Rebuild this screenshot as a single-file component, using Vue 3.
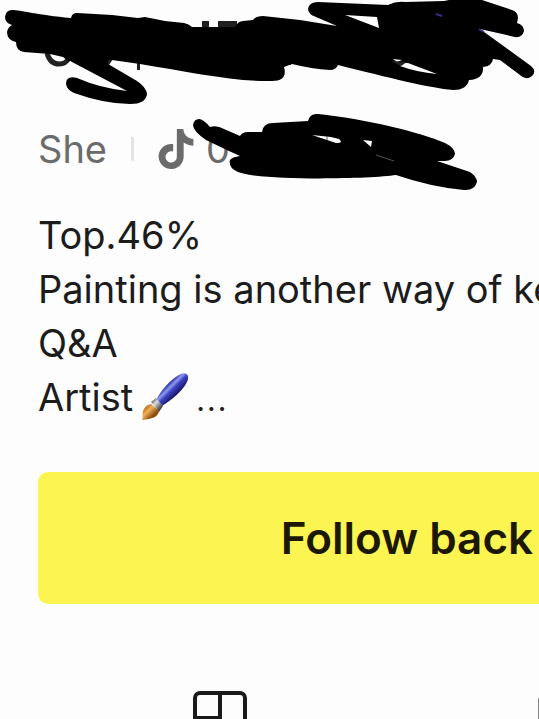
<script setup>
const bioLines = ['Top.46%', 'Painting is another way of ke', 'Q&A']
</script>

<template>
  <main class="page">
    <svg class="marks" viewBox="0 0 539 200" aria-hidden="true">
      <g class="name-bits">
        <path d="M202 21h7v7h-7zM218 21h19v9h-19zM137 62h3v8h-3zM103 59h10l-4 6h-5zM278 61h13v4h-13z" />
        <path class="arc" d="M47 53Q50 64 59 64Q66 64 69 58" />
      </g>
      <path
        fill-rule="evenodd"
        d="M12 10C20 10 38 15 71 18Q72 13 77 13L112 15L138 18L145 17L165 21L184 23Q189 24 192 27L235 27Q238 21 243 21L253 20Q256 16 263 16L300 20L337 26L316 17Q308 14 308 9Q309 2 318 2L388 5Q396 1 405 2L444 1L449 0H482L512 10Q518 12 518 18L517 23Q524 25 524 31Q522 38 515 37L480 29L531 66Q537 71 532 76Q526 81 520 75L500 60L493 59Q492 66 483 67Q484 79 469 80Q467 90 453 90C430 88 390 78 338 65Q336 70 330 70Q312 69 292 64L284 67Q288 81 272 81C235 82 190 72 140 64L112 60L68 61L63 57L50 54L24 52Q16 51 16 42Q7 40 7 32Q8 27 12 25Q5 23 5 17Q6 10 12 10ZM345 15L377 17L379 28ZM393 59L402 60L397 62ZM403 63L408 63L437 74Q416 72 400 66Z"
      />
      <path d="M66 58L72 62L127 91Q100 88 77 78Q66 75 66 84Q67 90 74 93Q105 104 130 104Q146 104 147 94Q146 87 137 81L108 64V58Z" />
      <path d="M391 61L407 62L401 66Z" class="remnant" />
      <path d="M436 14L442 16M479 29L484 32" class="ink" />
      <path
        fill-rule="evenodd"
        d="M199 119Q203 119 210 127Q217 125 224 129L240 136Q242 132 248 132L262 132Q263 123 273 123L308 121Q310 113 318 114C365 119 420 132 445 143Q455 148 455 154Q453 161 445 161L437 161L470 172Q477 177 477 182Q474 191 464 190Q431 187 396 175C370 179 260 181 238 172Q228 168 230 160Q232 157 240 156L229 151L206 140Q193 131 193 125Q194 119 199 119ZM312 135L331 137L339 139Q344 143 336 143ZM363 140L372 141L371 147Z"
      />
      <path class="hair" d="M376 155L394 161M327 136V140" />
    </svg>

    <div class="profile">
      <div class="meta">
        <span>She</span>
        <span class="divider"></span>
        <svg class="tiktok" viewBox="1.5 0 21 24" role="img" aria-label="TikTok">
          <path d="M12.525.02c1.31-.02 2.61-.01 3.91-.02.08 1.53.63 3.09 1.75 4.17 1.12 1.11 2.7 1.62 4.24 1.79v4.03c-1.44-.05-2.89-.35-4.2-.97-.57-.26-1.1-.59-1.62-.93-.01 2.92.01 5.84-.02 8.75-.08 1.4-.54 2.79-1.35 3.94-1.31 1.92-3.58 3.17-5.91 3.21-1.43.08-2.86-.31-4.08-1.03-2.02-1.19-3.44-3.37-3.65-5.71-.02-.5-.03-1-.01-1.49.18-1.9 1.12-3.72 2.58-4.96 1.66-1.44 3.98-2.13 6.15-1.72.02 1.48-.04 2.96-.04 4.44-.99-.32-2.15-.23-3.02.37-.63.41-1.11 1.04-1.36 1.75-.21.51-.15 1.07-.14 1.61.24 1.64 1.82 3.02 3.5 2.87 1.12-.01 2.19-.66 2.77-1.61.19-.33.4-.67.41-1.06.1-1.79.06-3.57.07-5.36.01-4.03-.01-8.05.02-12.07z" />
        </svg>
        <span>0</span>
      </div>

      <div class="bio">
        <p v-for="line in bioLines" :key="line">{{ line }}</p>
        <p class="artist">
          <span>Artist</span>
          <svg class="brush" viewBox="0 0 48 48" role="img" aria-label="Paintbrush">
            <defs>
              <linearGradient id="handle" x1="24" y1="14" x2="33" y2="23" gradientUnits="userSpaceOnUse">
                <stop offset="0" stop-color="#2a2f9c" />
                <stop offset=".3" stop-color="#8f9af0" />
                <stop offset=".55" stop-color="#3e44c4" />
                <stop offset="1" stop-color="#1b1c6c" />
              </linearGradient>
              <linearGradient id="ferrule" x1="10" y1="28" x2="19" y2="36" gradientUnits="userSpaceOnUse">
                <stop offset="0" stop-color="#555" />
                <stop offset=".4" stop-color="#ddd" />
                <stop offset="1" stop-color="#444" />
              </linearGradient>
              <linearGradient id="bristle" x1="3" y1="34" x2="12" y2="43" gradientUnits="userSpaceOnUse">
                <stop offset="0" stop-color="#a5651c" />
                <stop offset=".45" stop-color="#f0b055" />
                <stop offset="1" stop-color="#8a4a10" />
              </linearGradient>
            </defs>
            <path fill="url(#handle)" d="M15 27C20 17 31 5 40 1C44 -1 48 1 47 6C45 15 31 27 21 33Z" />
            <path fill="url(#ferrule)" d="M10 29L15 25L22 33L18 39Z" />
            <path fill="url(#bristle)" d="M10 31L18 38C17 45 9 46 1 47C3 44 0 41 3 36Q5 32 10 31Z" />
          </svg>
          <span class="more">…</span>
        </p>
      </div>

      <button class="follow" type="button">Follow back</button>

      <nav class="tabs" aria-label="Profile sections">
        <button type="button" aria-label="Grid">
          <svg viewBox="0 0 54 54">
            <rect x="2" y="2" width="50" height="50" rx="5" />
            <path d="M27 2V52M2 27H27M27 36H52" />
          </svg>
        </button>
        <button type="button" class="muted" aria-label="Saved">
          <svg viewBox="0 0 54 54">
            <rect x="2" y="6" width="50" height="44" rx="3" />
          </svg>
        </button>
      </nav>
    </div>
  </main>
</template>

<style>
body {
  margin: 0;
  background: #fdfdfd;
}
</style>

<style scoped>
.page {
  position: relative;
  height: 100vh;
  overflow: hidden;
  background: #fdfdfd;
  color: #1c1c1c;
  font-family: Inter, "Liberation Sans", sans-serif;
  font-size: 38px;
}
.marks {
  position: absolute;
  top: 0;
  left: 0;
  width: 100%;
  z-index: 1;
}
.name-bits { fill: #202020; }
.arc { fill: none; stroke: #202020; stroke-width: 5; }
.remnant { fill: #222; }
.ink { stroke: #35308a; stroke-width: 2; }
.hair { stroke: #555; stroke-width: 1; }
.profile {
  width: 151%;
  box-sizing: border-box;
  padding: 126px 38px 0;
}
.meta {
  display: flex;
  align-items: center;
  height: 46px;
  color: #6b6b6b;
}
.divider {
  width: 3px;
  height: 24px;
  margin: 0 24px;
  background: #e4e4e4;
}
.tiktok {
  width: 36px;
  height: 40px;
  margin-right: 12px;
  fill: #6b6b6b;
}
.bio {
  margin-top: 36px;
  line-height: 54px;
  white-space: nowrap;
}
.bio p { margin: 0; }
.artist {
  display: flex;
  align-items: center;
}
.brush {
  width: 48px;
  height: 48px;
  margin: 0 6px 0 8px;
}
.more { font-weight: 300; }
.follow {
  display: block;
  width: 100%;
  height: 132px;
  margin-top: 48px;
  padding: 0;
  border: 0;
  border-radius: 10px;
  background: #fcf451;
  color: #1c1800;
  font: 600 44px Inter, "Liberation Sans", sans-serif;
}
.tabs {
  display: grid;
  grid-template-columns: 1fr 1fr;
  margin: 87px 38px 0 10px;
}
.tabs button {
  display: flex;
  justify-content: center;
  padding: 0;
  border: 0;
  background: none;
}
.tabs svg {
  width: 54px;
  height: 54px;
  fill: none;
  stroke: #1a1a1a;
  stroke-width: 4;
}
.tabs .muted svg { stroke: #858585; }
</style>
